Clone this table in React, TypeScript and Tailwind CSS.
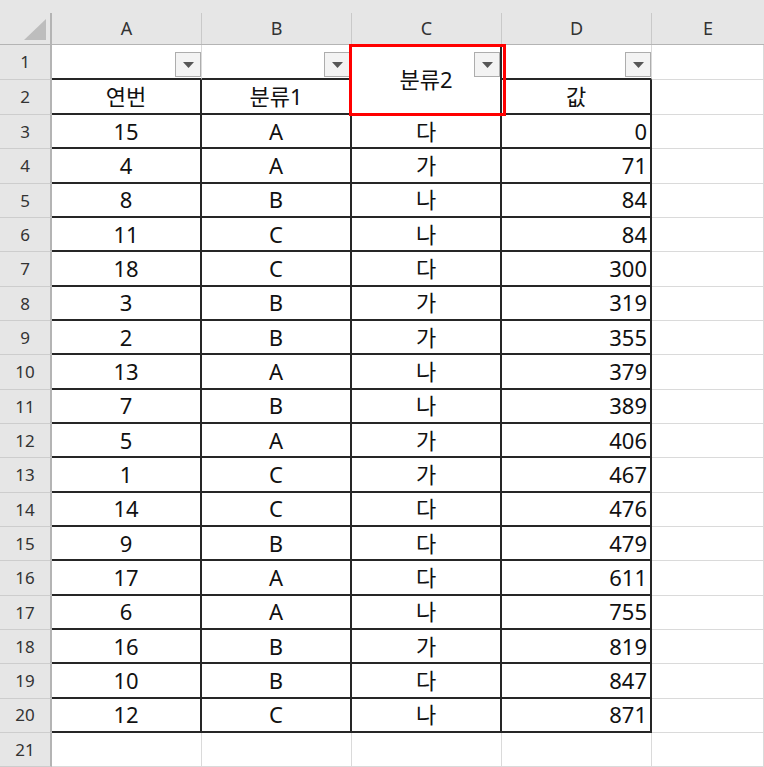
import React from "react";

type Row = [number, string, string, number];

const data: Row[] = [
  [15, "A", "다", 0],
  [4, "A", "가", 71],
  [8, "B", "나", 84],
  [11, "C", "나", 84],
  [18, "C", "다", 300],
  [3, "B", "가", 319],
  [2, "B", "가", 355],
  [13, "A", "나", 379],
  [7, "B", "나", 389],
  [5, "A", "가", 406],
  [1, "C", "가", 467],
  [14, "C", "다", 476],
  [9, "B", "다", 479],
  [17, "A", "다", 611],
  [6, "A", "나", 755],
  [16, "B", "가", 819],
  [10, "B", "다", 847],
  [12, "C", "나", 871],
];

function borders(rightBlack: boolean, bottomBlack: boolean) {
  const r = rightBlack ? "border-r-2 border-r-[#262626]" : "border-r border-r-[#dadada]";
  const b = bottomBlack ? "border-b-2 border-b-[#262626]" : "border-b border-b-[#dadada]";
  return r + " " + b;
}

function FilterButton() {
  return (
    <div className="absolute right-0 top-[7px] w-[26px] h-[25px] border border-[#adadad] bg-[#f3f3f3] flex items-center justify-center">
      <svg width="11" height="6" viewBox="0 0 11 6">
        <polygon points="0,0 11,0 5.5,6" fill="#575757" />
      </svg>
    </div>
  );
}

function ColHeader({ label, last }: { label: string; last?: boolean }) {
  return (
    <div className="bg-[#e6e6e6] border-b border-b-[#b4b4b4] flex items-end">
      <div
        className={
          "h-[31px] w-full flex items-center justify-center text-[18px] text-[#333] " +
          (last ? "" : "border-r border-r-[#c9c9c9]")
        }
      >
        {label}
      </div>
    </div>
  );
}

function RowHeader({ n }: { n: number }) {
  return (
    <div className="bg-[#e6e6e6] border-r-2 border-r-[#b4b4b4] border-b border-b-[#cdcdcd] flex items-center justify-center text-[17px] text-[#333]">
      {n}
    </div>
  );
}

export default function App() {
  const cellText = "flex items-center text-[22px] text-[#111]";
  return (
    <div className="relative w-[764px] h-[767px] overflow-hidden bg-white font-['Noto_Sans','Noto_Sans_CJK_KR',sans-serif]">
      <div className="grid grid-cols-[52px_150px_150px_150px_150px_112px] grid-rows-[45px_35px_35px_repeat(19,34.33px)]">
        {/* header row */}
        <div className="bg-[#e6e6e6] border-b border-b-[#b4b4b4] flex items-end">
          <div className="h-[31px] w-full border-r-2 border-r-[#b4b4b4] relative">
            <svg className="absolute right-[4px] bottom-[4px]" width="22" height="21" viewBox="0 0 22 21">
              <polygon points="22,0 22,21 0,21" fill="#bdbdbd" />
            </svg>
          </div>
        </div>
        <ColHeader label="A" />
        <ColHeader label="B" />
        <ColHeader label="C" />
        <ColHeader label="D" />
        <ColHeader label="E" last />

        {/* row 1 */}
        <RowHeader n={1} />
        <div className={"relative " + borders(false, true)}>
          <FilterButton />
        </div>
        <div className={"relative " + borders(true, true)}>
          <FilterButton />
        </div>
        <div className={"relative row-span-2 justify-center " + cellText + " " + borders(true, true)}>
          <FilterButton />
          <span>분류2</span>
        </div>
        <div className={"relative " + borders(false, true)}>
          <FilterButton />
        </div>
        <div className={borders(false, false)} />

        {/* row 2 */}
        <RowHeader n={2} />
        <div className={"justify-center " + cellText + " " + borders(true, true)}>연번</div>
        <div className={"justify-center " + cellText + " " + borders(true, true)}>분류1</div>
        <div className={"justify-center " + cellText + " " + borders(true, true)}>값</div>
        <div className={borders(false, false)} />

        {/* data rows */}
        {data.map((row, i) => (
          <React.Fragment key={i}>
            <RowHeader n={i + 3} />
            <div className={"justify-center " + cellText + " " + borders(true, true)}>{row[0]}</div>
            <div className={"justify-center " + cellText + " " + borders(true, true)}>{row[1]}</div>
            <div className={"justify-center " + cellText + " " + borders(true, true)}>{row[2]}</div>
            <div className={"justify-end pr-[3px] " + cellText + " " + borders(true, true)}>{row[3]}</div>
            <div className={borders(false, false)} />
          </React.Fragment>
        ))}

        {/* row 21 */}
        <RowHeader n={21} />
        <div className={borders(false, false)} />
        <div className={borders(false, false)} />
        <div className={borders(false, false)} />
        <div className={borders(false, false)} />
        <div className={borders(false, false)} />
      </div>

      {/* selection highlight */}
      <div className="absolute left-[349px] top-[44px] w-[157px] h-[72px] border-[3px] border-[#ff0000]" />
    </div>
  );
}
